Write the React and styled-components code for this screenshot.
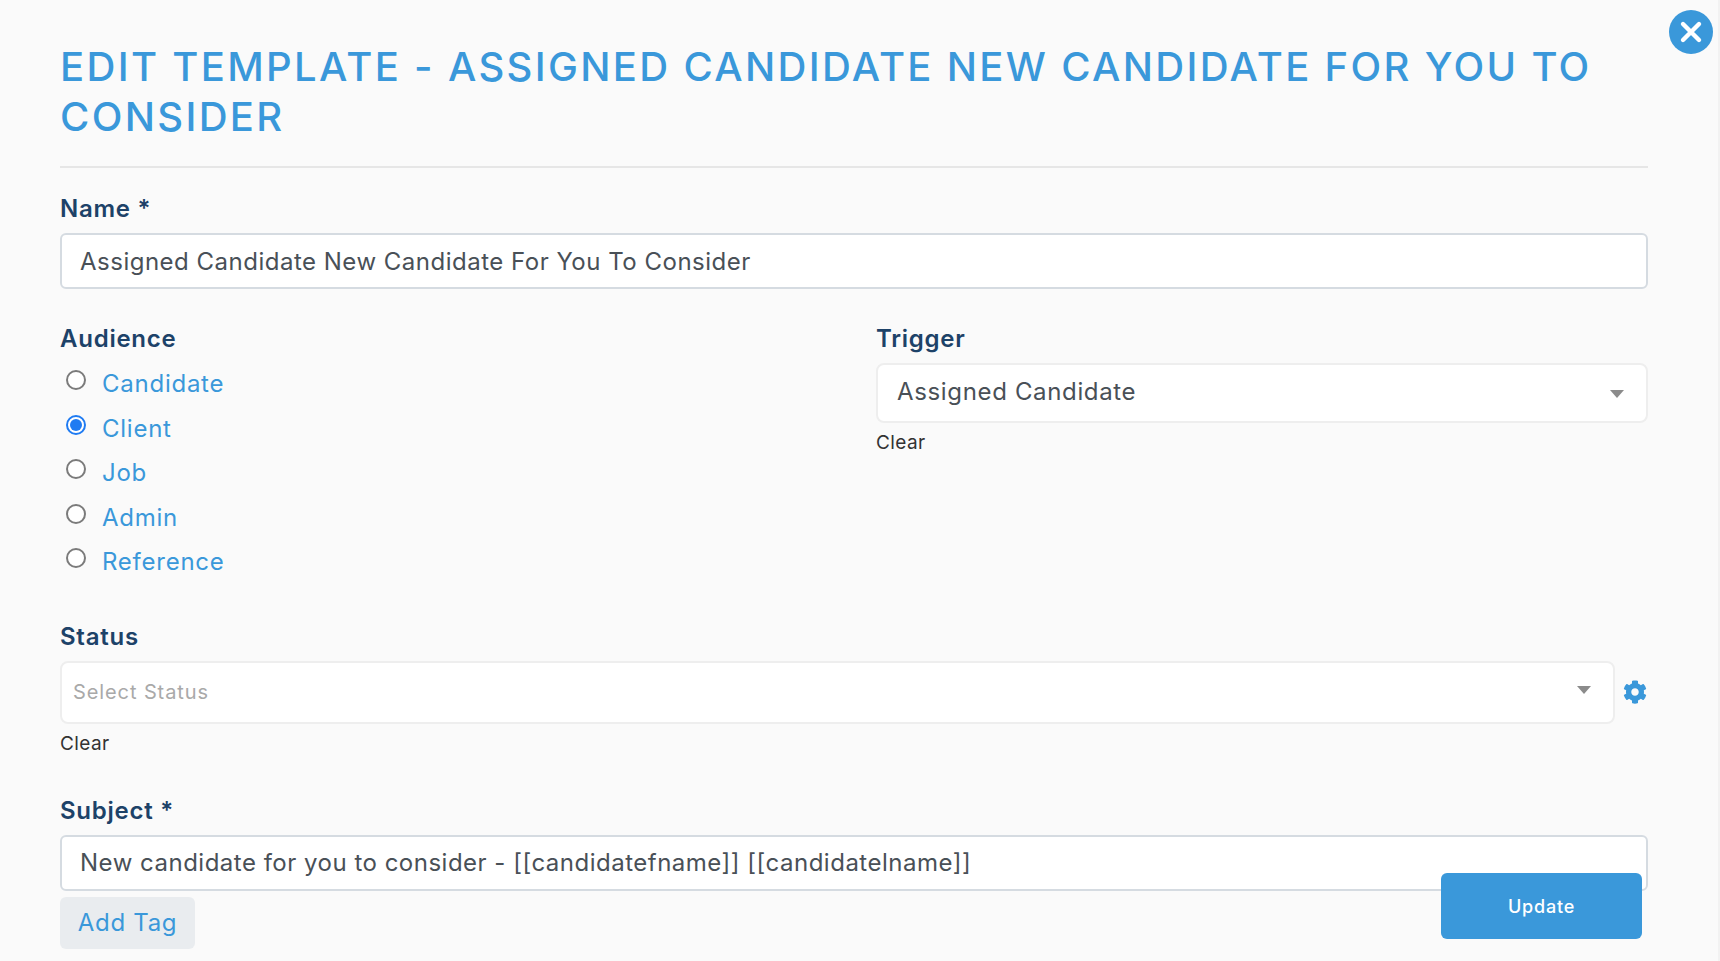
import React from "react";
import styled, { createGlobalStyle } from "styled-components";
import { FaCog } from "react-icons/fa";

const Global = createGlobalStyle`
  html, body { margin: 0; padding: 0; background: #fafafa; }
  body { font-family: Inter, "Liberation Sans", sans-serif; }
`;

const Page = styled.div`
  position: relative;
  width: 1720px;
  height: 961px;
  overflow: hidden;
  box-sizing: border-box;
  background: #fafafa;
  border-right: 2px solid #f2f2f2;
  padding: 42px 70px 0 60px;
  font-family: Inter, "Liberation Sans", sans-serif;
`;

const Title = styled.h1`
  margin: 0;
  font-size: 40px;
  line-height: 49.5px;
  font-weight: 500;
  letter-spacing: 2.33px;
  color: #3a98da;
  text-transform: uppercase;
`;

const Divider = styled.hr`
  margin: 25px 0 0;
  border: 0;
  border-top: 2px solid #e6e6e6;
`;

const Label = styled.label`
  display: block;
  font-size: 24px;
  line-height: 28px;
  font-weight: 600;
  color: #1d4268;
  letter-spacing: 0.75px;
`;

const Field = styled.div`
  margin-top: ${(p) => p.$top}px;
`;

const TextInput = styled.div`
  box-sizing: border-box;
  height: 56px;
  margin-top: 10px;
  padding: 0 18px;
  display: flex;
  align-items: center;
  background: #fff;
  border: 2px solid #d5dbe1;
  border-radius: 6px;
  font-size: 24px;
  color: #495057;
  letter-spacing: 0.5px;
  white-space: nowrap;
`;

const Columns = styled.div`
  display: grid;
  grid-template-columns: 816px 1fr;
  margin-top: 36px;
`;

const RadioList = styled.div`
  display: flex;
  flex-direction: column;
  margin-top: 14px;
`;

const RadioRow = styled.div`
  display: flex;
  align-items: flex-start;
  height: 44.6px;
  padding-left: 6px;
`;

const RadioDot = styled.span`
  box-sizing: border-box;
  flex: none;
  width: 20px;
  height: 20px;
  margin-top: 3px;
  border-radius: 50%;
  background: #fff;
  border: 2px solid ${(p) => (p.$on ? "#1f7bf2" : "#7b7b7b")};
  display: flex;
  align-items: center;
  justify-content: center;
  &::after {
    content: "";
    display: ${(p) => (p.$on ? "block" : "none")};
    width: 12px;
    height: 12px;
    border-radius: 50%;
    background: #1f7bf2;
  }
`;

const RadioText = styled.span`
  margin-left: 16px;
  font-size: 24px;
  line-height: 34px;
  color: #3a98da;
  letter-spacing: 0.75px;
`;

const SelectBox = styled.div`
  box-sizing: border-box;
  flex: 1;
  height: ${(p) => p.$h}px;
  display: flex;
  align-items: center;
  justify-content: space-between;
  background: #fff;
  border: 2px solid #eeeeee;
  border-radius: 8px;
  padding: 0 ${(p) => p.$right}px 0 ${(p) => p.$left}px;
`;

const SelectValue = styled.span`
  font-size: 24px;
  color: #495057;
  letter-spacing: 0.65px;
  padding-bottom: 4px;
`;

const Placeholder = styled.span`
  font-size: 20px;
  color: #a9a9a9;
  letter-spacing: 0.9px;
`;

const Caret = styled.span`
  width: 0;
  height: 0;
  border-left: 7px solid transparent;
  border-right: 7px solid transparent;
  border-top: 8px solid #8b8b8b;
  margin-top: ${(p) => p.$shift}px;
`;

const ClearLink = styled.div`
  margin-top: 8px;
  font-size: 19px;
  line-height: 24px;
  color: #333;
  letter-spacing: 0.4px;
`;

const SelectRow = styled.div`
  display: flex;
  align-items: center;
  margin-top: 10px;
`;

const GearWrap = styled.span`
  flex: none;
  width: 33px;
  display: flex;
  justify-content: flex-end;
  color: #3a98da;
  font-size: 24px;
  padding-right: 1px;
  box-sizing: border-box;
`;

const TagButton = styled.button`
  display: block;
  box-sizing: border-box;
  width: 135px;
  height: 52px;
  margin-top: 6px;
  padding: 0;
  border: 0;
  border-radius: 6px;
  background: #e9ecef;
  color: #3a98da;
  font: 400 24px Inter, "Liberation Sans", sans-serif;
  letter-spacing: 0.7px;
`;

const UpdateButton = styled.button`
  position: absolute;
  left: 1441px;
  top: 873px;
  width: 201px;
  height: 66px;
  border: 0;
  border-radius: 6px;
  background: #3a98da;
  color: #fff;
  font: 500 18px Inter, "Liberation Sans", sans-serif;
  letter-spacing: 0.8px;
`;

const CloseButton = styled.button`
  position: absolute;
  top: 10px;
  right: 5px;
  width: 44px;
  height: 44px;
  padding: 0;
  border: 0;
  border-radius: 50%;
  background: #3a98da;
  display: flex;
  align-items: center;
  justify-content: center;
`;

const audiences = ["Candidate", "Client", "Job", "Admin", "Reference"];

export default function App() {
  return (
    <Page>
      <Global />
      <CloseButton aria-label="Close">
        <svg width="24" height="24" viewBox="0 0 24 24" fill="none" stroke="#fff" strokeWidth="4.4" strokeLinecap="round">
          <path d="M4 4 20 20M20 4 4 20" />
        </svg>
      </CloseButton>
      <Title>Edit Template - Assigned Candidate New Candidate For You To Consider</Title>
      <Divider />
      <Field $top={27}>
        <Label>Name *</Label>
        <TextInput>Assigned Candidate New Candidate For You To Consider</TextInput>
      </Field>
      <Columns>
        <div>
          <Label>Audience</Label>
          <RadioList>
            {audiences.map((a) => (
              <RadioRow key={a}>
                <RadioDot $on={a === "Client"} />
                <RadioText>{a}</RadioText>
              </RadioRow>
            ))}
          </RadioList>
        </div>
        <div>
          <Label>Trigger</Label>
          <SelectRow>
            <SelectBox $h={60} $left={19} $right={22}>
              <SelectValue>Assigned Candidate</SelectValue>
              <Caret $shift={2} />
            </SelectBox>
          </SelectRow>
          <ClearLink>Clear</ClearLink>
        </div>
      </Columns>
      <Field $top={33}>
        <Label>Status</Label>
        <SelectRow>
          <SelectBox $h={63} $left={11} $right={22}>
            <Placeholder>Select Status</Placeholder>
            <Caret $shift={-5} />
          </SelectBox>
          <GearWrap>
            <FaCog />
          </GearWrap>
        </SelectRow>
        <ClearLink>Clear</ClearLink>
      </Field>
      <Field $top={41}>
        <Label>Subject *</Label>
        <TextInput>New candidate for you to consider - [[candidatefname]] [[candidatelname]]</TextInput>
        <TagButton>Add Tag</TagButton>
      </Field>
      <UpdateButton>Update</UpdateButton>
    </Page>
  );
}
